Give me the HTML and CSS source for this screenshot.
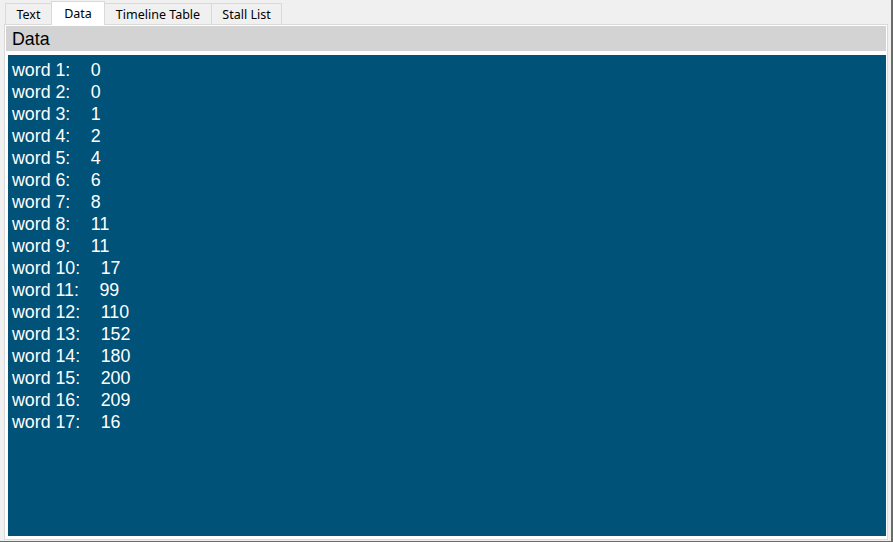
FILE: index.html
```html
<!DOCTYPE html>
<html>
<head>
<meta charset="utf-8">
<link rel="stylesheet" href="styles.css">
</head>
<body>
<div class="window">
  <div class="tabs">
    <div class="tab t-text">Text</div>
    <div class="tab t-data active">Data</div>
    <div class="tab t-timeline">Timeline Table</div>
    <div class="tab t-stall">Stall List</div>
  </div>
  <div class="pane">
    <div class="pane-header">Data</div>
    <div class="data-box">
      <div class="row"><span class="k">word 1:</span><span class="v">0</span></div>
      <div class="row"><span class="k">word 2:</span><span class="v">0</span></div>
      <div class="row"><span class="k">word 3:</span><span class="v">1</span></div>
      <div class="row"><span class="k">word 4:</span><span class="v">2</span></div>
      <div class="row"><span class="k">word 5:</span><span class="v">4</span></div>
      <div class="row"><span class="k">word 6:</span><span class="v">6</span></div>
      <div class="row"><span class="k">word 7:</span><span class="v">8</span></div>
      <div class="row"><span class="k">word 8:</span><span class="v">11</span></div>
      <div class="row"><span class="k">word 9:</span><span class="v">11</span></div>
      <div class="row"><span class="k">word 10:</span><span class="v">17</span></div>
      <div class="row"><span class="k">word 11:</span><span class="v">99</span></div>
      <div class="row"><span class="k">word 12:</span><span class="v">110</span></div>
      <div class="row"><span class="k">word 13:</span><span class="v">152</span></div>
      <div class="row"><span class="k">word 14:</span><span class="v">180</span></div>
      <div class="row"><span class="k">word 15:</span><span class="v">200</span></div>
      <div class="row"><span class="k">word 16:</span><span class="v">209</span></div>
      <div class="row"><span class="k">word 17:</span><span class="v">16</span></div>
    </div>
  </div>
</div>
</body>
</html>
```
FILE: styles.css
```css
html, body {
  margin: 0;
  padding: 0;
  background: #f0f0f0;
}

.window {
  width: 891px;
  height: 541px;
  border-right: 2px solid #6a6a6a;
  border-bottom: 1px solid #6a6a6a;
  display: flex;
  flex-direction: column;
  background: #f0f0f0;
  font-family: "Liberation Sans", Arial, sans-serif;
}

.tabs {
  display: flex;
  align-items: flex-end;
  height: 21px;
  margin-top: 3px;
  padding-left: 5px;
  position: relative;
  z-index: 1;
}

.tab {
  box-sizing: border-box;
  height: 21px;
  border: 1px solid #d9d9d9;
  border-bottom: none;
  background: #f0f0f0;
  font-family: "Noto Sans", "Open Sans", sans-serif;
  font-size: 12.5px;
  line-height: 20px;
  padding-top: 1px;
  color: #000;
  text-align: center;
  margin-left: -1px;
  overflow: hidden;
}

.tab:first-child {
  margin-left: 0;
}

.tab.active {
  height: 24px;
  margin-bottom: -1px;
  background: #fff;
  position: relative;
  z-index: 2;
  line-height: 22px;
  padding-top: 1px;
}

.t-text { width: 47px; }
.t-data { width: 54px; }
.t-timeline { width: 108px; }
.t-stall { width: 71px; }

.pane {
  box-sizing: border-box;
  margin-left: 4px;
  width: 884px;
  height: 516px;
  border: 1px solid #d9d9d9;
  background: #fff;
  padding: 1px 1px 0 1px;
  display: flex;
  flex-direction: column;
}

.pane-header {
  box-sizing: border-box;
  height: 25px;
  background: #d3d3d3;
  padding: 1px 0 0 6px;
  font-size: 17.8px;
  line-height: 25px;
  color: #000;
  overflow: hidden;
}

.data-box {
  flex: 1;
  margin: 4px 0 3px 2px;
  background: #005278;
  padding: 4px 4px 0 4px;
  color: #fff;
  font-size: 17.8px;
  line-height: 22px;
}

.row {
  white-space: nowrap;
}

.v {
  margin-left: 20.5px;
}
```
